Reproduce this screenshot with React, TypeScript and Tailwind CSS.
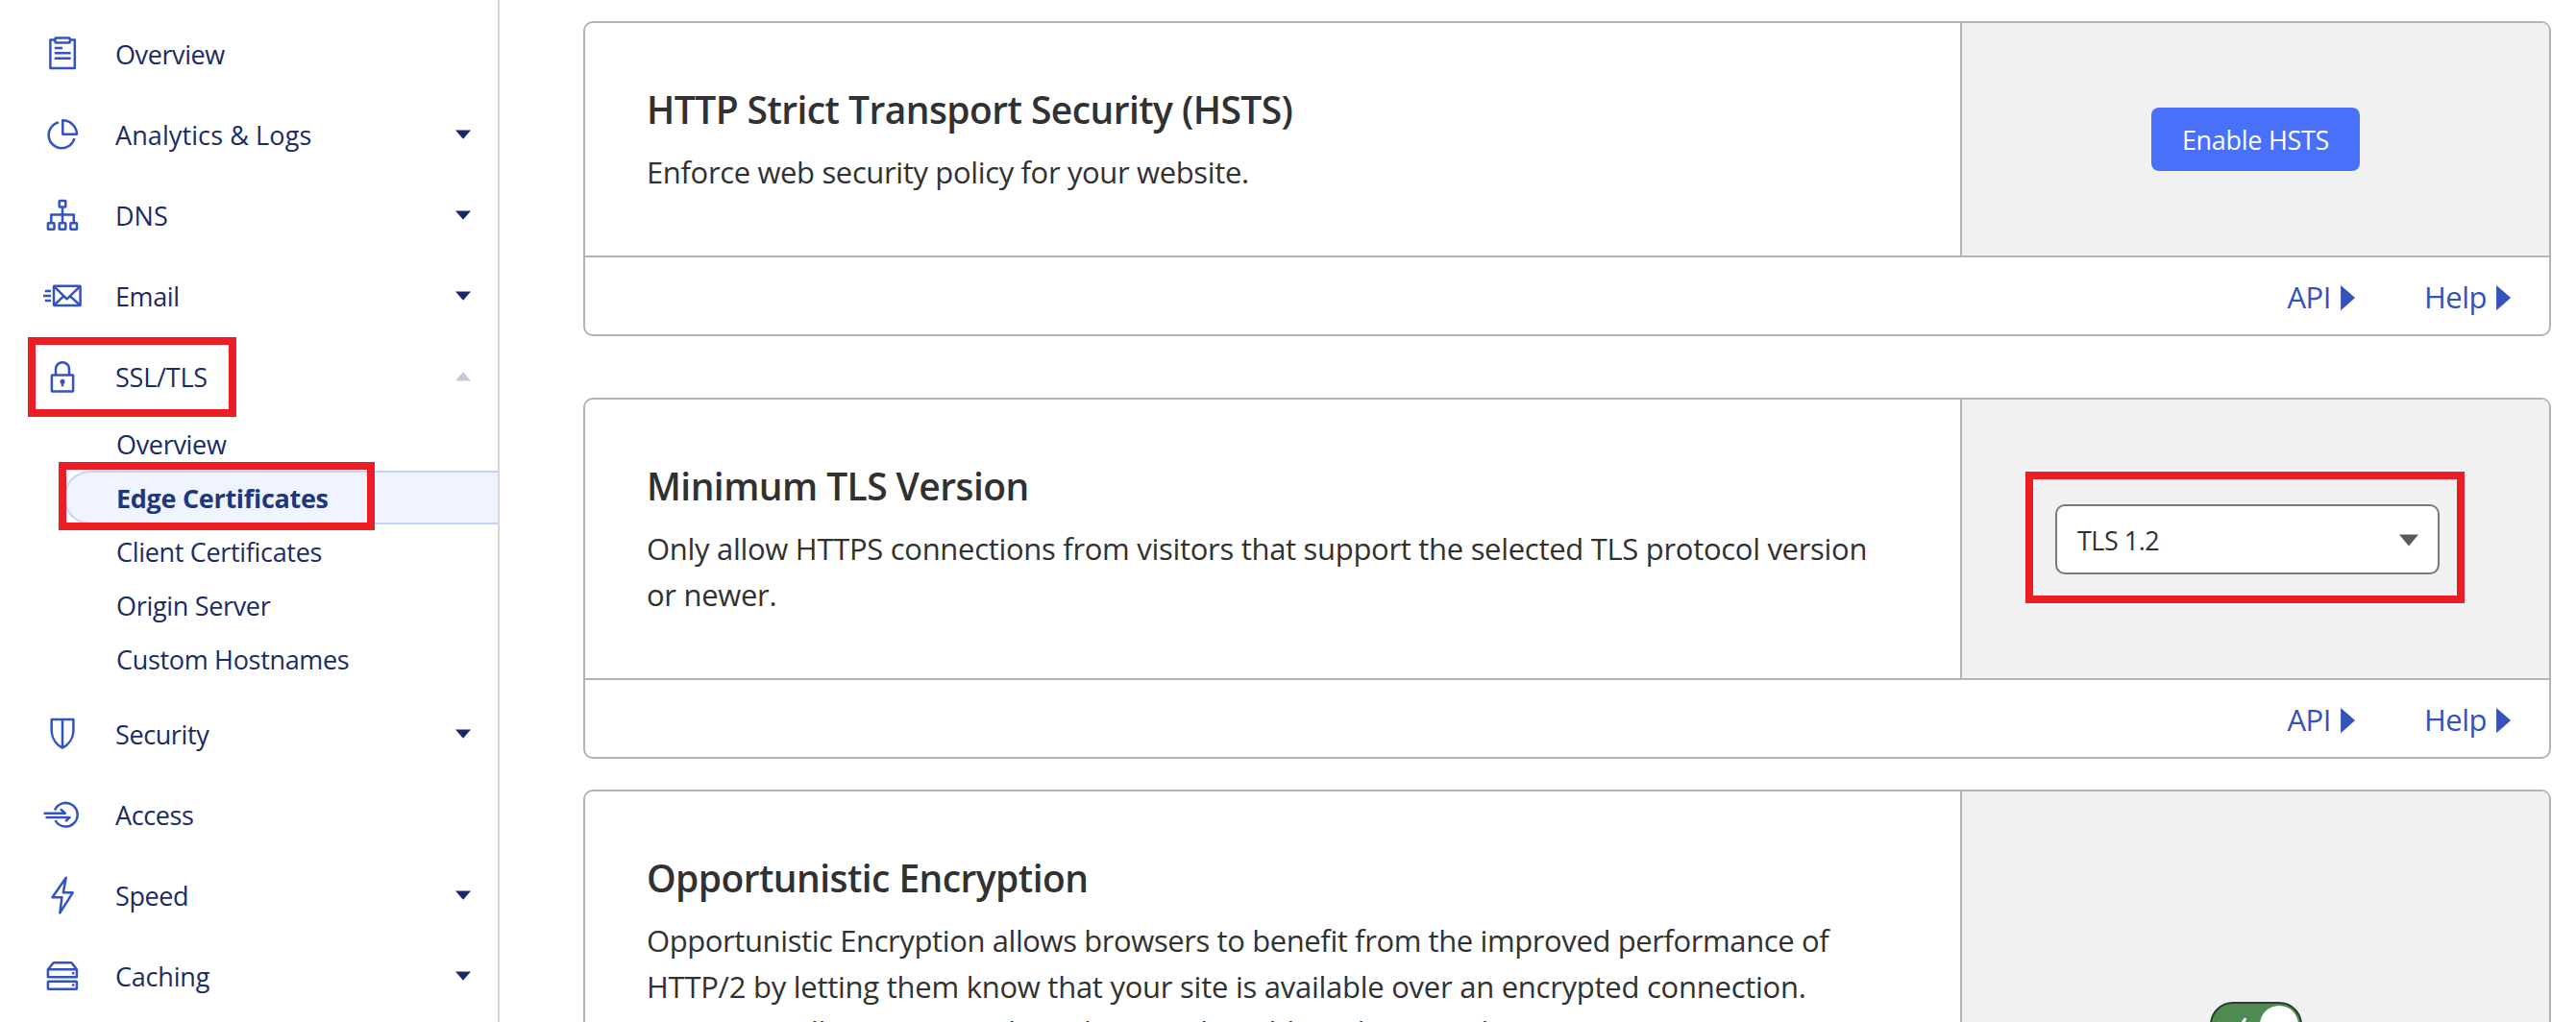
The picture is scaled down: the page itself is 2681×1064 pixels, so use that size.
import type { ReactNode } from 'react';

type NavItem = {
  name: string;
  icon: ReactNode;
  tracking?: string;
  expandable?: boolean;
  open?: boolean;
  children?: { name: string; active?: boolean }[];
};

const NAV_ITEMS: NavItem[] = [
  {
    name: 'Overview',
    icon: (
      <>
        <path d="M16.3 9.5H11.4V39.1H36.8V9.5H31.8" />
        <rect x="16.4" y="7.6" width="15.4" height="5" rx="1" />
        <path d="M15.8 18H24M15.8 23.3H32.6M15.8 28.7H32.6" />
      </>
    ),
  },
  {
    name: 'Analytics & Logs',
    tracking: 'tracking-[0.1px]',
    expandable: true,
    icon: (
      <>
        <path d="M20 11.4A13.6 13.6 0 1 0 36.4 28" />
        <path d="M24.3 9.3V23.8H39A14.8 14.8 0 0 0 24.3 9.3Z" />
      </>
    ),
  },
  {
    name: 'DNS',
    tracking: 'tracking-normal',
    expandable: true,
    icon: (
      <>
        <rect x="20.7" y="9" width="6.6" height="6.6" rx="0.5" />
        <rect x="8.9" y="32.2" width="6.6" height="6.6" rx="0.5" />
        <rect x="20.7" y="32.2" width="6.6" height="6.6" rx="0.5" />
        <rect x="32.4" y="32.2" width="6.6" height="6.6" rx="0.5" />
        <path d="M24 15.6V32M12.3 32V23.6H35.8V32" />
      </>
    ),
  },
  {
    name: 'Email',
    expandable: true,
    icon: (
      <>
        <rect x="15" y="13.8" width="27.6" height="20.2" rx="0.5" />
        <path d="M15 13.8L28.6 27.3L42.6 13.8M15 34L25.2 24.3M42.6 34L32 24.3" />
        <path d="M5.8 19H12M4 24H12M5.8 29H12" />
      </>
    ),
  },
  {
    name: 'SSL/TLS',
    tracking: 'tracking-[-0.2px]',
    expandable: true,
    open: true,
    icon: (
      <>
        <rect x="12.9" y="22.4" width="22.2" height="17" rx="0.5" />
        <path d="M17 22.3V16.2A7 7 0 0 1 31 16.2V22.3" />
        <circle cx="24" cy="29.2" r="1.3" fill="currentColor" />
        <path d="M24 30V34.3" />
      </>
    ),
    children: [
      { name: 'Overview' },
      { name: 'Edge Certificates', active: true },
      { name: 'Client Certificates' },
      { name: 'Origin Server' },
      { name: 'Custom Hostnames' },
    ],
  },
  {
    name: 'Security',
    expandable: true,
    icon: <path d="M12.7 9.1H35.4V20.5C35.4 29 30 35.5 24 38.7C18 35.5 12.7 29 12.7 20.5ZM24 9.1V38.7" />,
  },
  {
    name: 'Access',
    icon: (
      <>
        <path d="M16 19.5A12.3 12.3 0 1 1 16.5 30" />
        <path d="M4.5 22.7H26.8L22 18.3" />
        <path d="M6.5 26.9H31.6L27.2 31.2" />
      </>
    ),
  },
  {
    name: 'Speed',
    expandable: true,
    icon: <path d="M27.7 5.8L13.5 26.2H23.4L21.4 42.4L34.7 21.3H24.8Z" />,
  },
  {
    name: 'Caching',
    tracking: 'tracking-[-0.2px]',
    expandable: true,
    icon: (
      <>
        <path d="M8.9 17.3L14.8 10.2H33.4L38.9 17.3V25.3H8.9ZM8.9 17.3H38.9" />
        <rect x="8.9" y="29.7" width="30" height="8" rx="0.5" />
        <path d="M34 21.2H36.4M34 33.6H36.4" />
      </>
    ),
  },
];

function Caret({ open }: { open?: boolean }) {
  return open ? (
    <svg width="16" height="10" viewBox="0 0 16 10" className="text-[#c5c8d8]">
      <path d="M0 9.6L8 0.3L16 9.6Z" fill="currentColor" />
    </svg>
  ) : (
    <svg width="16" height="10" viewBox="0 0 16 10" className="text-[#182a64]">
      <path d="M0 0.4L8 9.7L16 0.4Z" fill="currentColor" />
    </svg>
  );
}

function Sidebar() {
  return (
    <nav className="w-[520px] shrink-0 border-r-2 border-[#d6d6d6] pt-[14px] text-[27px] text-[#1b2b63] tracking-[-0.4px]">
      {NAV_ITEMS.map((item) => (
        <div key={item.name} className={item.children ? 'mb-2' : ''}>
          <div className="relative flex h-[84px] items-center pl-[41px] pr-7">
            <svg
              width="48"
              height="48"
              viewBox="0 0 48 48"
              fill="none"
              stroke="currentColor"
              strokeWidth="2.5"
              strokeLinejoin="round"
              className="mr-[31px] text-[#3453c2]"
            >
              {item.icon}
            </svg>
            <span className={`flex-1 pt-0.5 ${item.tracking ?? ''}`}>{item.name}</span>
            {item.expandable && <Caret open={item.open} />}
            {item.open && (
              <div className="absolute left-[29px] top-px h-[83px] w-[217px] border-8 border-[#ee1c24]" />
            )}
          </div>
          {item.children?.map((child) =>
            child.active ? (
              <div key={child.name} className="relative pl-[66px]">
                <div className="flex h-14 items-center rounded-l-full border-2 border-r-0 border-[#bfd5fb] bg-[#eff4ff] pl-[53px] pt-0.5 font-bold text-[#20377c] tracking-[-0.3px]">
                  {child.name}
                </div>
                <div className="absolute -top-[9px] left-[61px] h-[71px] w-[329px] border-8 border-[#ee1c24]" />
              </div>
            ) : (
              <div key={child.name} className="flex h-14 items-center pl-[121px] pt-0.5 tracking-[-0.32px]">
                {child.name}
              </div>
            )
          )}
        </div>
      ))}
    </nav>
  );
}

function FooterLink({ label }: { label: string }) {
  return (
    <a href="#" className="flex items-center text-[31px] text-[#3352bd] tracking-[-0.5px]">
      {label}
      <svg width="15" height="26" viewBox="0 0 15 26" className="ml-[10px] mt-0.5">
        <path
          d="M0.5 0.8L14.6 13L0.5 25.6Z"
          fill="currentColor"
          stroke="currentColor"
          strokeLinejoin="round"
          strokeWidth="0.8"
        />
      </svg>
    </a>
  );
}

type SettingCardProps = {
  title: string;
  description: ReactNode;
  control: ReactNode;
};

function SettingCard({ title, description, control }: SettingCardProps) {
  return (
    <section className="w-[2048px] shrink-0 overflow-hidden rounded-[10px] border-2 border-[#b3b3b3] bg-white">
      <div className="flex border-b-2 border-[#b3b3b3]">
        <div className="w-[1431px] pb-[63px] pl-16 pt-16 text-[#313131]">
          <h2 className="text-[39px] font-semibold leading-[52px] tracking-[-0.58px]">{title}</h2>
          <div className="mt-[15px] whitespace-nowrap text-[31px] leading-[48px] tracking-[-0.36px]">
            {description}
          </div>
        </div>
        <div className="flex flex-1 items-center justify-center border-l-2 border-[#b3b3b3] bg-[#f1f1f1]">
          {control}
        </div>
      </div>
      <div className="flex h-20 items-center justify-end gap-[72px] pr-10 pt-0.5">
        <FooterLink label="API" />
        <FooterLink label="Help" />
      </div>
    </section>
  );
}

function TlsSelect() {
  return (
    <div className="relative mr-[17px] mt-px">
      <div className="flex h-[73px] w-[400px] items-center justify-between rounded-[10px] border-2 border-[#797979] bg-white pl-[21px] pr-5 pt-0.5 text-[27px] text-[#313131] tracking-[-0.5px]">
        <span className="pt-0.5">TLS 1.2</span>
        <svg width="20" height="13" viewBox="0 0 20 13" className="text-[#595959]">
          <path d="M0 0.4H20L10 12.6Z" fill="currentColor" />
        </svg>
      </div>
      <div className="absolute -left-[31px] -top-[34px] h-[137px] w-[457px] border-8 border-[#ee1c24]" />
    </div>
  );
}

function Toggle() {
  return (
    <div className="flex h-12 w-24 items-center justify-between rounded-full border-2 border-[#26412a] bg-[#4f8a50] pl-5 pr-0.5">
      <svg
        width="18"
        height="18"
        viewBox="0 0 18 18"
        fill="none"
        stroke="white"
        strokeWidth="3"
        strokeLinecap="round"
      >
        <path d="M2 10.5L6.5 15.5L14.5 3.2" />
      </svg>
      <div className="h-10 w-10 rounded-full bg-white" />
    </div>
  );
}

export default function App() {
  return (
    <div className="flex h-[1064px] w-[2681px] overflow-hidden bg-white font-['Open_Sans','Noto_Sans',sans-serif]">
      <Sidebar />
      <main className="flex flex-col pl-[87px] pt-[22px]">
        <SettingCard
          title="HTTP Strict Transport Security (HSTS)"
          description="Enforce web security policy for your website."
          control={
            <button className="h-[66px] w-[217px] rounded-lg bg-[#4970f8] pt-0.5 text-[27px] text-white tracking-[-0.3px]">
              Enable HSTS
            </button>
          }
        />
        <div className="h-16 shrink-0" />
        <SettingCard
          title="Minimum TLS Version"
          description={
            <p className="tracking-[-0.3px]">
              Only allow HTTPS connections from visitors that support the selected TLS protocol version
              <br />
              or newer.
            </p>
          }
          control={<TlsSelect />}
        />
        <div className="h-8 shrink-0" />
        <SettingCard
          title="Opportunistic Encryption"
          description={
            <div className="h-[292px]">
              <p className="tracking-[-0.4px]">
                Opportunistic Encryption allows browsers to benefit from the improved performance of
              </p>
              <p className="tracking-[-0.26px]">
                HTTP/2 by letting them know that your site is available over an encrypted connection.
              </p>
              <p className="-mt-px">
                Browsers will continue to show “http” in the address bar, not “https”.
              </p>
            </div>
          }
          control={<Toggle />}
        />
      </main>
    </div>
  );
}
